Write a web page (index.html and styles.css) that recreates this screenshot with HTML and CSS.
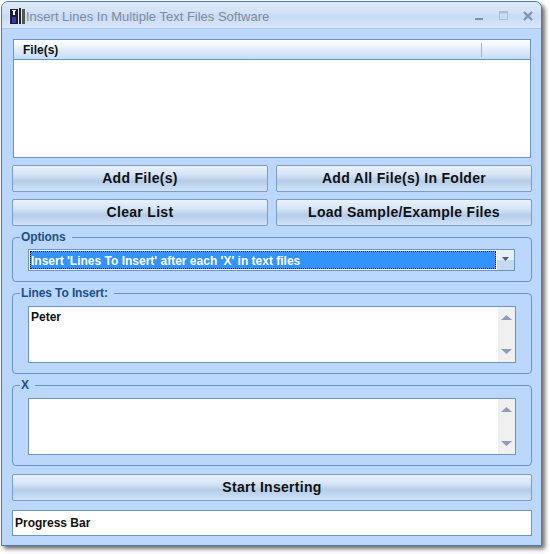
FILE: index.html
```html
<!DOCTYPE html>
<html lang="en">
<head>
    <meta charset="UTF-8">
    <title>Insert Lines In Multiple Text Files Software</title>
    <link rel="stylesheet" href="styles.css">
</head>
<body>
    <div class="window">
        <div class="titlebar">
            <svg class="app-icon" width="16" height="16" viewBox="0 0 16 16">
                <rect x="0" y="1" width="16" height="15" fill="#e8e8f0"/>
                <rect x="1" y="1" width="8" height="15" fill="#1a1a3c"/>
                <rect x="10" y="0" width="2" height="16" fill="#222"/>
                <rect x="13" y="1" width="3" height="15" fill="#555"/>
                <rect x="3" y="2" width="4" height="1" fill="#fff"/>
                <rect x="4" y="3" width="2" height="4" fill="#fff"/>
                <rect x="3" y="9" width="4" height="6" fill="#3a3a9c"/>
            </svg>
            <span class="title">Insert Lines In Multiple Text Files Software</span>
            <div class="caption-btns">
                <svg width="14" height="14" viewBox="0 0 14 14"><rect x="2" y="9" width="8" height="2" fill="#7d93ad"/></svg>
                <svg width="14" height="14" viewBox="0 0 14 14"><rect x="2.5" y="2.5" width="8" height="8" fill="none" stroke="#a9bdd6"/><rect x="2" y="2" width="9" height="2.5" fill="#a9bdd6"/></svg>
                <svg width="14" height="14" viewBox="0 0 14 14"><path d="M3 3l8 8M11 3l-8 8" stroke="#7d93ad" stroke-width="2.2" fill="none"/></svg>
            </div>
        </div>
        <div class="content">
            <div class="file-list">
                <div class="list-header"><div class="col-files">File(s)</div></div>
            </div>
            <div class="button-grid">
                <button class="btn">Add File(s)</button>
                <button class="btn">Add All File(s) In Folder</button>
                <button class="btn">Clear List</button>
                <button class="btn">Load Sample/Example Files</button>
            </div>
            <fieldset class="group options-group">
                <legend>Options</legend>
                <div class="combo">
                    <div class="combo-value"><span class="combo-text">Insert 'Lines To Insert' after each 'X' in text files</span></div>
                    <div class="combo-arrow">
                        <svg width="7" height="4" viewBox="0 0 7 4"><path d="M0 0h7L3.5 4z" fill="#4a5f7d"/></svg>
                    </div>
                </div>
            </fieldset>
            <fieldset class="group text-group">
                <legend>Lines To Insert:</legend>
                <div class="memo">
                    <div class="memo-text">Peter</div>
                    <div class="scrollbar">
                        <svg width="11" height="5" viewBox="0 0 11 5"><path d="M5.5 0l5.5 5H0z" fill="#8d9db8"/></svg>
                        <svg width="11" height="5" viewBox="0 0 11 5"><path d="M0 0h11L5.5 5z" fill="#8d9db8"/></svg>
                    </div>
                </div>
            </fieldset>
            <fieldset class="group text-group">
                <legend>X</legend>
                <div class="memo">
                    <div class="memo-text"></div>
                    <div class="scrollbar">
                        <svg width="11" height="5" viewBox="0 0 11 5"><path d="M5.5 0l5.5 5H0z" fill="#8d9db8"/></svg>
                        <svg width="11" height="5" viewBox="0 0 11 5"><path d="M0 0h11L5.5 5z" fill="#8d9db8"/></svg>
                    </div>
                </div>
            </fieldset>
            <button class="btn start-btn">Start Inserting</button>
            <div class="progress">Progress Bar</div>
        </div>
    </div>
</body>
</html>
```

FILE: styles.css
```css
html, body {
    margin: 0;
    padding: 0;
    background: #fff;
}
body {
    width: 550px;
    height: 554px;
    overflow: hidden;
    font-family: "Liberation Sans", Arial, sans-serif;
}
.window {
    width: 541px;
    height: 545px;
    margin: 1px 0 0 1px;
    box-sizing: border-box;
    background: #bbd7fb;
    border: 1px solid #51779f;
    border-radius: 7px 7px 0 0;
    box-shadow: 3px 3px 4px #6f6f6f;
}
.titlebar {
    height: 27px;
    box-sizing: border-box;
    display: flex;
    align-items: center;
    padding: 2px 6px 0 7px;
    background: linear-gradient(#dfeafa 0%, #cfe0f6 45%, #c7dbf5 55%, #d8e6f9 100%);
    border-bottom: 1px solid #a9c7ec;
    border-radius: 6px 6px 0 0;
}
.app-icon {
    flex: none;
}
.title {
    margin-left: 1px;
    font-size: 13px;
    color: #7f8a99;
}
.caption-btns {
    margin-left: auto;
    display: flex;
    gap: 10px;
}
.content {
    padding: 10px 9px 0 10px;
}
.file-list {
    height: 119px;
    box-sizing: border-box;
    margin: 0 1px;
    background: #fff;
    border: 1px solid #6e94bd;
}
.list-header {
    height: 20px;
    box-sizing: border-box;
    padding-top: 3px;
    background: linear-gradient(#ffffff, #c5dbf6);
    border-bottom: 1px solid #6e94bd;
}
.col-files {
    width: 458px;
    height: 14px;
    padding-left: 9px;
    border-right: 1px solid #93b3d8;
    font-size: 12px;
    line-height: 14px;
    font-weight: bold;
    color: #111;
}
.button-grid {
    margin-top: 7px;
    display: grid;
    grid-template-columns: 256px 256px;
    column-gap: 8px;
    row-gap: 7px;
}
.btn {
    display: block;
    height: 27px;
    padding: 0 0 2px;
    border: 1px solid #7b9cc3;
    border-radius: 2px;
    background: linear-gradient(#eaf2fc 0%, #d5e4f6 35%, #b5cde9 60%, #cfe2f9 100%);
    font-family: "Liberation Sans", Arial, sans-serif;
    font-size: 14px;
    font-weight: bold;
    letter-spacing: 0.3px;
    color: #111;
}
.group {
    margin: 0;
    min-width: 0;
    border: 1px solid #6e94bd;
    border-radius: 4px;
    padding: 0;
}
.group legend {
    margin-left: 7px;
    padding: 0 6px 0 1px;
    font-size: 12px;
    line-height: 14px;
    font-weight: bold;
    letter-spacing: -0.1px;
    color: #1f4f86;
}
.options-group {
    margin-top: 4px;
    height: 52px;
    width: 520px;
    box-sizing: border-box;
}
.combo {
    display: flex;
    height: 22px;
    width: 487px;
    margin: 5px 0 0 15px;
    box-sizing: border-box;
    background: #fff;
    border: 1px solid #6e94bd;
}
.combo-value {
    flex: 1;
    margin: 1px;
    box-sizing: border-box;
    background: #3193fb;
    outline: 1px dotted #111;
    outline-offset: -1px;
    padding-left: 1px;
    overflow: hidden;
}
.combo-text {
    font-size: 12px;
    line-height: 18px;
    font-weight: bold;
    color: #fff;
    white-space: nowrap;
}
.combo-arrow {
    width: 17px;
    display: flex;
    justify-content: center;
    padding-top: 7px;
    box-sizing: border-box;
    background: linear-gradient(#e7eff9 50%, #c7d9f0 50%);
}
.combo-arrow svg {
    display: block;
}
.text-group {
    margin-top: 4px;
    height: 88px;
    width: 520px;
    box-sizing: border-box;
}
.memo {
    display: flex;
    width: 488px;
    height: 57px;
    margin: 6px 0 0 15px;
    box-sizing: border-box;
    background: #fff;
    border: 1px solid #6e94bd;
}
.memo-text {
    flex: 1;
    padding: 3px 2px;
    font-size: 12px;
    line-height: 14px;
    font-weight: bold;
    color: #111;
}
.scrollbar {
    width: 17px;
    display: flex;
    flex-direction: column;
    justify-content: space-between;
    align-items: center;
    padding: 8px 0;
    box-sizing: border-box;
    background: #f0f0f0;
}
.start-btn {
    width: 520px;
    margin-top: 8px;
}
.progress {
    width: 520px;
    height: 26px;
    margin-top: 9px;
    box-sizing: border-box;
    padding-left: 2px;
    background: #fff;
    border: 1px solid #6e94bd;
    font-size: 12px;
    line-height: 24px;
    font-weight: bold;
    color: #111;
}
```
